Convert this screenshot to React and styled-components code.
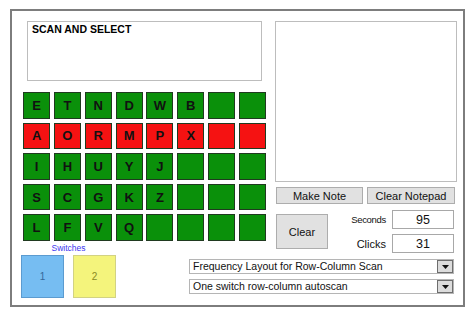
import React from "react";
import styled, { createGlobalStyle } from "styled-components";

const Global = createGlobalStyle`
  * { box-sizing: border-box; }
  html, body { margin: 0; padding: 0; background: #ffffff; }
  body { font-family: "Liberation Sans", Arial, sans-serif; color: #000; }
`;

const Frame = styled.div`
  margin: 9px 0 0 10px;
  width: 455px;
  height: 298px;
  border: 2px solid #7d7d7d;
  padding: 10px 6px 6px 9px;
  display: grid;
  grid-template-columns: 168px 86px 182px;
  grid-template-rows: 220px 15px 43px;
  grid-template-areas:
    "board board side"
    "switches . side"
    "switches selects selects";
`;

const Board = styled.div`
  grid-area: board;
  display: flex;
  flex-direction: column;
`;

const MessageBox = styled.div`
  margin-left: 6px;
  width: 235px;
  height: 60px;
  border: 1px solid #bdbdbd;
  padding: 1px 4px;
  font-size: 10.5px;
  font-weight: bold;
  line-height: 12px;
`;

const LetterGrid = styled.div`
  margin: 11px 0 0 2px;
  width: 243px;
  height: 149px;
  display: grid;
  grid-template-columns: repeat(8, 1fr);
  grid-template-rows: repeat(5, 1fr);
  gap: 3.7px;
`;

const Cell = styled.div`
  background: ${(p) => (p.$active ? "#f51212" : "#0a900a")};
  border: 1px solid #203a20;
  display: flex;
  align-items: center;
  justify-content: center;
  font-size: 13px;
  font-weight: bold;
  color: #111;
`;

const Side = styled.div`
  grid-area: side;
  display: flex;
  flex-direction: column;
`;

const Notepad = styled.div`
  height: 161px;
  border: 1px solid #bdbdbd;
`;

const ButtonRow = styled.div`
  margin-top: 5px;
  display: flex;
  gap: 4px;
  padding-left: 1px;
`;

const Button = styled.div`
  width: ${(p) => p.$w}px;
  height: ${(p) => p.$h}px;
  background: #e1e1e1;
  border: 1px solid #adadad;
  display: flex;
  align-items: center;
  justify-content: center;
  font-size: 11px;
  color: #111;
`;

const StatsBlock = styled.div`
  margin-top: 6px;
  display: flex;
  align-items: flex-start;
  padding-left: 1px;
`;

const ClearWrap = styled.div`
  margin-top: 4px;
`;

const Stats = styled.div`
  margin-left: auto;
  margin-right: 3px;
  display: grid;
  grid-template-columns: auto 62px;
  column-gap: 6px;
  row-gap: 5px;
  align-items: center;
`;

const StatLabel = styled.div`
  text-align: right;
  font-size: ${(p) => p.$size}px;
  letter-spacing: ${(p) => (p.$tight ? "-0.3px" : "0")};
  color: #111;
`;

const StatBox = styled.div`
  height: 19px;
  border: 1px solid #a8a8a8;
  display: flex;
  align-items: center;
  justify-content: center;
  font-size: 12.5px;
  color: #111;
`;

const SwitchGroup = styled.div`
  grid-area: switches;
  width: 95px;
  display: flex;
  flex-direction: column;
`;

const SwitchLabel = styled.div`
  margin-top: 2px;
  height: 10px;
  line-height: 10px;
  text-align: center;
  font-size: 8.5px;
  color: #4036f0;
`;

const SwitchRow = styled.div`
  margin-top: 2px;
  display: flex;
  gap: 9px;
`;

const SwitchPad = styled.div`
  width: 43px;
  height: 43px;
  background: ${(p) => p.$bg};
  border: 1px solid ${(p) => p.$border};
  color: ${(p) => p.$fg};
  display: flex;
  align-items: center;
  justify-content: center;
  font-size: 10px;
`;

const Selects = styled.div`
  grid-area: selects;
  margin-top: 3px;
  width: 265px;
  display: flex;
  flex-direction: column;
  gap: 5px;
`;

const Select = styled.div`
  height: 15px;
  border: 1px solid #b5b5b5;
  display: flex;
  align-items: stretch;
`;

const SelectText = styled.div`
  flex: 1;
  padding-left: 3px;
  font-size: 10.5px;
  line-height: 13px;
  color: #111;
  white-space: nowrap;
  overflow: hidden;
`;

const SelectArrow = styled.div`
  width: 16px;
  background: #dcdcdc;
  border: 1px solid #6e6e6e;
  display: flex;
  align-items: center;
  justify-content: center;
`;

const rows = [
  ["E", "T", "N", "D", "W", "B", "", ""],
  ["A", "O", "R", "M", "P", "X", "", ""],
  ["I", "H", "U", "Y", "J", "", "", ""],
  ["S", "C", "G", "K", "Z", "", "", ""],
  ["L", "F", "V", "Q", "", "", "", ""],
];

const Arrow = () => (
  <svg width="7" height="4" viewBox="0 0 7 4">
    <path d="M0 0 H7 L3.5 4 Z" fill="#111" />
  </svg>
);

export default function App() {
  return (
    <>
      <Global />
      <Frame>
        <Board>
          <MessageBox>SCAN AND SELECT</MessageBox>
          <LetterGrid>
            {rows.map((r, ri) =>
              r.map((l, ci) => (
                <Cell key={`${ri}-${ci}`} $active={ri === 1}>
                  {l}
                </Cell>
              ))
            )}
          </LetterGrid>
        </Board>
        <Side>
          <Notepad />
          <ButtonRow>
            <Button $w={87} $h={17}>Make Note</Button>
            <Button $w={88} $h={17}>Clear Notepad</Button>
          </ButtonRow>
          <StatsBlock>
            <ClearWrap>
              <Button $w={52} $h={35}>Clear</Button>
            </ClearWrap>
            <Stats>
              <StatLabel $size={9.5} $tight>Seconds</StatLabel>
              <StatBox>95</StatBox>
              <StatLabel $size={11}>Clicks</StatLabel>
              <StatBox>31</StatBox>
            </Stats>
          </StatsBlock>
        </Side>
        <SwitchGroup>
          <SwitchLabel>Switches</SwitchLabel>
          <SwitchRow>
            <SwitchPad $bg="#76bdf2" $border="#5b9bd0" $fg="#35689a">1</SwitchPad>
            <SwitchPad $bg="#f4f47c" $border="#d2d283" $fg="#8a8a22">2</SwitchPad>
          </SwitchRow>
        </SwitchGroup>
        <Selects>
          <Select>
            <SelectText>Frequency Layout for Row-Column Scan</SelectText>
            <SelectArrow><Arrow /></SelectArrow>
          </Select>
          <Select>
            <SelectText>One switch row-column autoscan</SelectText>
            <SelectArrow><Arrow /></SelectArrow>
          </Select>
        </Selects>
      </Frame>
    </>
  );
}
